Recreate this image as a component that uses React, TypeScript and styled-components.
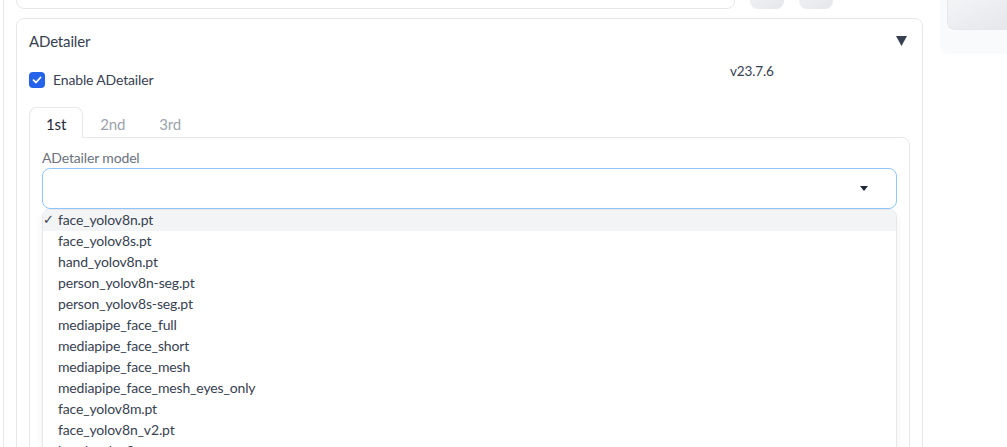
import React from "react";
import styled, { createGlobalStyle } from "styled-components";

const GlobalStyle = createGlobalStyle`
  html, body {
    margin: 0;
    padding: 0;
    background: #ffffff;
    overflow: hidden;
  }
  body {
    font-family: "Lato", "Noto Sans", sans-serif;
    color: #374151;
    letter-spacing: -0.15px;
  }
  * { box-sizing: border-box; }
`;

const Page = styled.div`
  display: flex;
  width: 1007px;
  height: 447px;
  overflow: hidden;
  background: #ffffff;
`;

const MainColumn = styled.div`
  width: 937px;
  flex: none;
  margin-left: 3px;
  border-left: 1px solid #e5e7eb;
  padding: 0 17px 0 12px;
`;

const SideColumn = styled.div`
  flex: 1;
  min-width: 0;
`;

const SidePanel = styled.div`
  height: 54px;
  background: #f9fafb;
  border-bottom-left-radius: 8px;
  padding-left: 7px;
`;

const SideButton = styled.div`
  height: 30px;
  background: linear-gradient(to bottom right, #f3f4f6, #e5e7eb);
  border: 1px solid #e5e7eb;
  border-top: none;
  border-right: none;
  border-bottom-left-radius: 8px;
`;

const TopRow = styled.div`
  display: flex;
  align-items: flex-end;
  gap: 15px;
  height: 9px;
  overflow: hidden;
`;

const PrevBox = styled.div`
  flex: none;
  width: 719px;
  height: 40px;
  border: 1px solid #e5e7eb;
  border-radius: 8px;
  background: #ffffff;
`;

const ToolButton = styled.div`
  flex: none;
  width: 34px;
  height: 40px;
  border-radius: 8px;
  background: linear-gradient(to bottom right, #f3f4f6, #e5e7eb);
`;

const Card = styled.div`
  margin-top: 9px;
  border: 1px solid #e5e7eb;
  border-radius: 8px;
  padding: 12px 12px 0;
  background: #ffffff;
`;

const CardHeader = styled.div`
  display: flex;
  align-items: center;
  justify-content: space-between;
  height: 20px;
  font-size: 15px;
  line-height: 18px;
  color: #374151;
`;

const Chevron = styled.svg`
  width: 11px;
  height: 10px;
  margin-right: 3px;
`;

const OptionsRow = styled.div`
  display: grid;
  grid-template-columns: 1fr 180px;
  margin-top: 12px;
`;

const CheckLabel = styled.label`
  display: flex;
  align-items: center;
  gap: 8px;
  padding-top: 9px;
  font-size: 14px;
  line-height: 16px;
  color: #374151;
`;

const CheckBox = styled.span`
  display: inline-flex;
  align-items: center;
  justify-content: center;
  width: 16px;
  height: 16px;
  border-radius: 4px;
  background: #2563eb;
`;

const Version = styled.div`
  font-size: 13.5px;
  line-height: 16px;
  color: #374151;
`;

const TabNav = styled.div`
  display: flex;
  margin-top: 19px;
  position: relative;
  z-index: 1;
`;

const TabButton = styled.div<{ $active?: boolean }>`
  height: 31px;
  padding: 2px 16px 0;
  display: flex;
  align-items: center;
  font-size: 15px;
  border: 1px solid ${(p) => (p.$active ? "#e5e7eb" : "transparent")};
  border-bottom: none;
  border-radius: 8px 8px 0 0;
  background: ${(p) => (p.$active ? "#ffffff" : "transparent")};
  color: ${(p) => (p.$active ? "#1f2937" : "#9ca3af")};
  margin-bottom: -1px;
`;

const TabPanel = styled.div`
  border: 1px solid #e5e7eb;
  border-radius: 0 8px 8px 8px;
  padding: 12px;
`;

const FieldLabel = styled.div`
  font-size: 14px;
  line-height: 16px;
  color: #6b7280;
  margin-bottom: 2px;
`;

const SelectWrap = styled.div`
  position: relative;
`;

const SelectBox = styled.div`
  height: 41px;
  border: 1px solid #93c5fd;
  border-radius: 8px;
  background: #ffffff;
  display: flex;
  align-items: center;
  justify-content: flex-end;
  padding-right: 28px;
`;

const Caret = styled.svg`
  width: 8px;
  height: 5px;
`;

const OptionList = styled.ul`
  position: absolute;
  top: 100%;
  left: 0;
  right: 0;
  margin: 0;
  padding: 0;
  list-style: none;
  background: #ffffff;
  border: 1px solid #e5e7eb;
  border-radius: 8px;
  box-shadow: 0 4px 10px rgba(0, 0, 0, 0.06);
  overflow: hidden;
  z-index: 5;
`;

const OptionItem = styled.li<{ $selected?: boolean }>`
  position: relative;
  height: 21px;
  line-height: 20px;
  padding: 0 8px 0 15px;
  font-size: 14px;
  color: #374151;
  white-space: nowrap;
  background: ${(p) => (p.$selected ? "#f3f4f6" : "transparent")};
`;

const CheckMark = styled.span`
  position: absolute;
  left: 0;
  top: 0;
  font-family: "DejaVu Sans", sans-serif;
  font-size: 13px;
  color: #374151;
`;

const HiddenContent = styled.div`
  height: 420px;
`;

const models = [
  "face_yolov8n.pt",
  "face_yolov8s.pt",
  "hand_yolov8n.pt",
  "person_yolov8n-seg.pt",
  "person_yolov8s-seg.pt",
  "mediapipe_face_full",
  "mediapipe_face_short",
  "mediapipe_face_mesh",
  "mediapipe_face_mesh_eyes_only",
  "face_yolov8m.pt",
  "face_yolov8n_v2.pt",
  "hand_yolov8s.pt",
];

export default function App() {
  return (
    <>
      <GlobalStyle />
      <Page>
        <MainColumn>
          <TopRow>
            <PrevBox />
            <ToolButton />
            <ToolButton />
          </TopRow>
          <Card>
            <CardHeader>
              <span>ADetailer</span>
              <Chevron viewBox="0 0 11 10">
                <polygon points="0,0 11,0 5.5,10" fill="#374151" />
              </Chevron>
            </CardHeader>
            <OptionsRow>
              <CheckLabel>
                <CheckBox>
                  <svg width="10" height="8" viewBox="0 0 10 8">
                    <path
                      d="M1.5 4.2 L4 6.5 L8.5 1.5"
                      fill="none"
                      stroke="#ffffff"
                      strokeWidth="1.8"
                      strokeLinecap="round"
                      strokeLinejoin="round"
                    />
                  </svg>
                </CheckBox>
                Enable ADetailer
              </CheckLabel>
              <Version>v23.7.6</Version>
            </OptionsRow>
            <TabNav>
              <TabButton $active>1st</TabButton>
              <TabButton>2nd</TabButton>
              <TabButton>3rd</TabButton>
            </TabNav>
            <TabPanel>
              <FieldLabel>ADetailer model</FieldLabel>
              <SelectWrap>
                <SelectBox>
                  <Caret viewBox="0 0 8 5">
                    <polygon points="0,0 8,0 4,5" fill="#1f2937" />
                  </Caret>
                </SelectBox>
                <OptionList>
                  {models.map((m, i) => (
                    <OptionItem key={m} $selected={i === 0}>
                      {i === 0 && <CheckMark>✓</CheckMark>}
                      {m}
                    </OptionItem>
                  ))}
                </OptionList>
              </SelectWrap>
              <HiddenContent />
            </TabPanel>
          </Card>
        </MainColumn>
        <SideColumn>
          <SidePanel>
            <SideButton />
          </SidePanel>
        </SideColumn>
      </Page>
    </>
  );
}
